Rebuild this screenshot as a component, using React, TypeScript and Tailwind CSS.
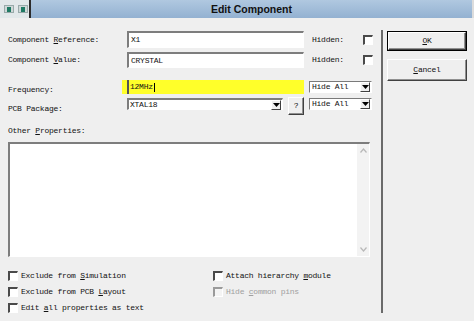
const Check = ({ disabled = false }: { disabled?: boolean }) => (
  <span
    className={`inline-block w-[10px] h-[10px] shrink-0 border-t-2 border-l-2 border-r border-b border-[#4a4a4a] border-r-white border-b-white ${disabled ? "bg-[#f4f4f4] border-[#9a9a9a]" : "bg-white"}`}
  />
);

const Arrow = () => (
  <span className="flex w-[10px] h-[10px] items-center justify-center bg-[#efefef] border border-t-white border-l-white border-b-[#404040] border-r-[#404040]">
    <svg width="7" height="4" viewBox="0 0 7 4">
      <polygon points="0,0 7,0 3.5,4" fill="#000" />
    </svg>
  </span>
);

const HideAll = () => (
  <div className="flex items-center justify-between w-[63px] h-[12px] bg-white border border-t-[#7a7a7a] border-l-[#7a7a7a] border-b-white border-r-white pl-[2px] pr-[1px]">
    <span>Hide All</span>
    <Arrow />
  </div>
);

const TitleIcon = () => (
  <span className="flex w-[10px] h-[8px] items-center justify-center bg-[#cfd8d8] border border-[#9aa]">
    <span className="w-[4px] h-[5px] bg-[#1f7a64]" />
  </span>
);

const sunken =
  "bg-white border-t-2 border-l-2 border-b border-r border-t-[#7d7d7d] border-l-[#7d7d7d] border-b-white border-r-white";

export default function App() {
  return (
    <div className="w-[474px] h-[321px] overflow-hidden bg-[#efefef] text-[#111] font-['Liberation_Mono',monospace] text-[8px] tracking-[-0.25px] leading-none">
      <div className="flex h-[18px]">
        <div className="flex w-[29px] items-center gap-[4px] pl-[4px] bg-[#e2e8ea]">
          <TitleIcon />
          <TitleIcon />
        </div>
        <div className="w-[2px] bg-[#2c2c2c]" />
        <div className="flex flex-1 items-center justify-center bg-gradient-to-b from-[#b0c8e0] to-[#93b1d1] font-['Liberation_Sans',sans-serif] text-[10.5px] tracking-normal font-bold text-[#111]">
          Edit Component
        </div>
        <div className="w-[2px] bg-[#dcdcdc]" />
      </div>

      <div className="flex">
        <div className="w-[381px] pl-[8px]">
          <div className="mt-[13px] flex h-[17px] items-center">
            <span className="w-[119px]">
              Component <u>R</u>eference:
            </span>
            <div className={`w-[177px] h-full pl-[2px] pt-[3px] ${sunken}`}>X1</div>
            <span className="ml-[8px] w-[51px]">Hidden:</span>
            <Check />
          </div>
          <div className="mt-[4px] flex h-[16px] items-center">
            <span className="w-[119px]">
              Component <u>V</u>alue:
            </span>
            <div className={`w-[177px] h-full pl-[2px] pt-[3px] ${sunken}`}>CRYSTAL</div>
            <span className="ml-[8px] w-[51px]">Hidden:</span>
            <Check />
          </div>

          <div className="mt-[12px] flex h-[14px] items-center">
            <span className="w-[119px] pt-[5px]">Frequency:</span>
            <div className="ml-[-5px] h-full w-[182px] bg-[#ffff2a] pl-[5px]">
              <div className="flex h-full items-center border-l-2 border-[#555] pl-[1px]">
                <span>12MHz</span>
                <span className="ml-[1px] h-[9px] w-px bg-black" />
              </div>
            </div>
            <div className="ml-[5px]">
              <HideAll />
            </div>
          </div>

          <div className="mt-[3px] flex h-[18px] items-start">
            <span className="w-[119px] pt-[8px]">PCB Package:</span>
            <div className={`mt-[1px] flex w-[156px] h-[12px] items-center justify-between pl-[1px] pr-[1px] ${sunken}`}>
              <span>XTAL18</span>
              <Arrow />
            </div>
            <div className="ml-[5px] flex h-[18px] w-[16px] items-center justify-center border border-t-white border-l-white border-b-[#404040] border-r-[#404040] shadow-[inset_-1px_-1px_0_#909090]">
              ?
            </div>
            <div className="ml-[5px] mt-[1px]">
              <HideAll />
            </div>
          </div>

          <div className="mt-[12px] h-[10px]">
            Other <u>P</u>roperties:
          </div>
          <div className={`mt-[5px] flex h-[115px] w-[362px] justify-end ${sunken}`}>
            <div className="flex w-[12px] flex-col items-center justify-between bg-[#f3f3f3] py-[4px]">
              <svg width="7" height="5" viewBox="0 0 7 5">
                <polyline points="0.5,4.5 3.5,1 6.5,4.5" fill="none" stroke="#b8b8b8" strokeWidth="1.2" />
              </svg>
              <svg width="7" height="5" viewBox="0 0 7 5">
                <polyline points="0.5,0.5 3.5,4 6.5,0.5" fill="none" stroke="#b8b8b8" strokeWidth="1.2" />
              </svg>
            </div>
          </div>

          <div className="mt-[14px] grid grid-cols-[205px_1fr] gap-y-[6px]">
            <div className="flex items-center gap-[3px]">
              <Check />
              <span>
                Exclude from <u>S</u>imulation
              </span>
            </div>
            <div className="flex items-center gap-[3px]">
              <Check />
              <span>
                Attach hierarchy <u>m</u>odule
              </span>
            </div>
            <div className="flex items-center gap-[3px]">
              <Check />
              <span>
                Exclude from PCB <u>L</u>ayout
              </span>
            </div>
            <div className="flex items-center gap-[3px] text-[#a0a0a0]">
              <Check disabled />
              <span>
                Hide <u>c</u>ommon pins
              </span>
            </div>
            <div className="flex items-center gap-[3px]">
              <Check />
              <span>
                Edit <u>a</u>ll properties as text
              </span>
            </div>
          </div>
        </div>

        <div className="mt-[12px] h-[283px] w-[2px] bg-[#6a6a6a]" />

        <div className="flex flex-col pl-[4px] pt-[13px]">
          <div className="h-[20px] w-[80px] border border-black">
            <div className="flex h-full items-center justify-center border border-t-white border-l-white border-b-[#404040] border-r-[#404040] shadow-[inset_-1px_-1px_0_#909090]">
              <span>
                <u>O</u>K
              </span>
            </div>
          </div>
          <div className="mt-[8px] flex h-[22px] w-[80px] items-center justify-center border border-t-white border-l-white border-b-[#404040] border-r-[#404040] shadow-[inset_-1px_-1px_0_#909090]">
            <span>
              <u>C</u>ancel
            </span>
          </div>
        </div>
      </div>
    </div>
  );
}
